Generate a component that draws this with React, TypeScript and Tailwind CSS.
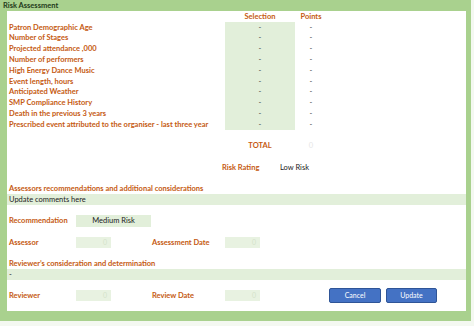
import React from "react"

const rows = [
  "Patron Demographic Age",
  "Number of Stages",
  "Projected attendance ,000",
  "Number of performers",
  "High Energy Dance Music",
  "Event length, hours",
  "Anticipated Weather",
  "SMP Compliance History",
  "Death in the previous 3 years",
  "Prescribed event attributed to the organiser - last three year",
]

const Label = ({ children, className = "" }: { children: React.ReactNode; className?: string }) => (
  <span className={`font-bold text-[#c55a11] ${className}`}>{children}</span>
)

const SmallBox = () => (
  <div className="flex h-[11px] w-[35px] items-center justify-end bg-[#e8f2e1] pr-[4px] text-[7px] text-[#d4e3ca]">0</div>
)

export default function App() {
  return (
    <div
      className="h-[326px] w-[474px] overflow-hidden bg-[#f4f8f1] text-[7.5px] leading-none"
      style={{ fontFamily: "Lato, 'Open Sans', sans-serif" }}
    >
      <div className="flex h-[321px] w-[471px] flex-col bg-[#a9d18e]">
        <div className="flex h-[11px] items-center pl-[3px] font-bold text-[#1f3a1a]">Risk Assessment</div>

        <div className="mb-[10px] ml-[7px] mr-[5px] flex flex-1 flex-col bg-white pl-[2px]">
          {/* table header */}
          <div className="flex h-[11px] items-center">
            <div className="w-[216px]" />
            <Label className="w-[70px] text-center">Selection</Label>
            <Label className="w-[32px] text-center">Points</Label>
          </div>

          {/* table rows */}
          <div className="flex">
            <div className="flex w-[216px] flex-col">
              {rows.map((r) => (
                <div key={r} className="flex h-[10.8px] items-center">
                  <Label>{r}</Label>
                </div>
              ))}
            </div>
            <div className="flex w-[70px] flex-col bg-[#e2efda]">
              {rows.map((r) => (
                <div key={r} className="flex h-[10.8px] items-center justify-center text-[#444]">-</div>
              ))}
            </div>
            <div className="flex w-[32px] flex-col">
              {rows.map((r) => (
                <div key={r} className="flex h-[10.8px] items-center justify-center text-[#444]">-</div>
              ))}
            </div>
          </div>

          <div className="mt-[11px] flex h-[10px] items-center">
            <div className="w-[216px]" />
            <Label className="w-[70px] text-center">TOTAL</Label>
            <span className="w-[32px] text-center text-[#e6e6e6]">0</span>
          </div>

          <div className="mt-[12px] flex h-[10px] items-center">
            <div className="w-[213px]" />
            <Label className="w-[58px]">Risk Rating</Label>
            <span className="text-[#222]">Low Risk</span>
          </div>

          <div className="mt-[11px] flex h-[10px] items-center">
            <Label>Assessors recommendations and additional considerations</Label>
          </div>
          <div className="-ml-[2px] flex h-[11px] items-center bg-[#e2efda] pl-[2px] text-[#222]">Update comments here</div>

          <div className="mt-[10px] flex h-[12px] items-center">
            <Label className="w-[67px]">Recommendation</Label>
            <div className="flex h-[12px] w-[75px] items-center justify-center bg-[#e2efda] text-[#222]">Medium Risk</div>
          </div>

          <div className="mt-[10px] flex h-[11px] items-center">
            <Label className="w-[67px]">Assessor</Label>
            <SmallBox />
            <div className="w-[41px]" />
            <Label className="w-[73px]">Assessment Date</Label>
            <SmallBox />
          </div>

          <div className="mt-[11px] flex h-[10px] items-center">
            <Label>Reviewer’s consideration and determination</Label>
          </div>
          <div className="-ml-[2px] flex h-[11px] items-center bg-[#e2efda] pl-[2px] text-[#222]">-</div>

          <div className="mt-[8px] flex h-[15px] items-center">
            <Label className="w-[67px]">Reviewer</Label>
            <SmallBox />
            <div className="w-[41px]" />
            <Label className="w-[73px]">Review Date</Label>
            <SmallBox />
            <div className="w-[69px]" />
            <button className="h-[15px] w-[52px] rounded-[2px] border border-[#2f5597] bg-[#4472c4] text-[7px] text-white">
              Cancel
            </button>
            <button className="ml-[5px] h-[15px] w-[51px] rounded-[2px] border border-[#2f5597] bg-[#4472c4] text-[7px] text-white">
              Update
            </button>
          </div>
        </div>
      </div>
    </div>
  )
}
